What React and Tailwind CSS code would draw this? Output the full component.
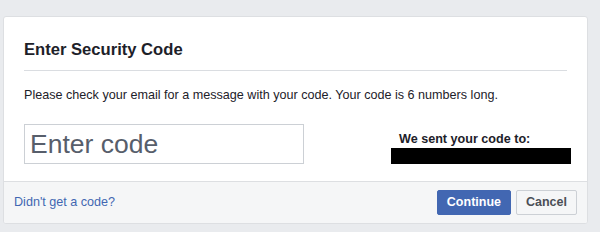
export default function App() {
  return (
    <div className="min-h-[232px] bg-[#e9ebee] pl-[3px] pr-[12px] pt-[16px] font-['Liberation_Sans',Arial,sans-serif]">
      <div className="rounded-[3px] border border-[#dddfe2] bg-white overflow-hidden">
        <div className="px-5 pt-[22px] pb-[17px]">
          <h2 className="text-[16.6px] leading-[22px] font-bold text-[#1d2129]">Enter Security Code</h2>
          <div className="mt-[9px] h-px bg-[#dadde1]" />
          <p className="mt-[16px] text-[12.6px] leading-[16px] text-[#1d2129]">
            Please check your email for a message with your code. Your code is 6 numbers long.
          </p>
          <div className="mt-[21px] flex items-start">
            <input
              type="text"
              placeholder="Enter code"
              className="h-[40px] w-[280px] border border-[#ccd0d5] bg-white px-[5px] text-[26.5px] text-[#1d2129] outline-none placeholder:text-[#575e6b]"
            />
            <div className="ml-auto mr-[-4px] h-[40px] w-[180px] pt-[7px]">
              <div className="pl-[8px] text-[12.6px] leading-[16px] font-bold text-[#1d2129]">We sent your code to:</div>
              <div className="mt-[1px] h-[16px] bg-black" />
            </div>
          </div>
        </div>
        <div className="flex items-center justify-between border-t border-[#dddfe2] bg-[#f5f6f7] px-[10px] py-[8px]">
          <a href="#" className="text-[12.6px] text-[#4267b2]">Didn't get a code?</a>
          <div className="flex gap-[5px]">
            <button className="h-[25px] rounded-[2px] border border-[#4267b2] bg-[#4267b2] px-[9px] text-[12.5px] font-bold text-white">
              Continue
            </button>
            <button className="h-[25px] rounded-[2px] border border-[#ccd0d5] bg-[#f5f6f7] px-[9px] text-[12.5px] font-bold text-[#4b4f56]">
              Cancel
            </button>
          </div>
        </div>
      </div>
    </div>
  );
}
